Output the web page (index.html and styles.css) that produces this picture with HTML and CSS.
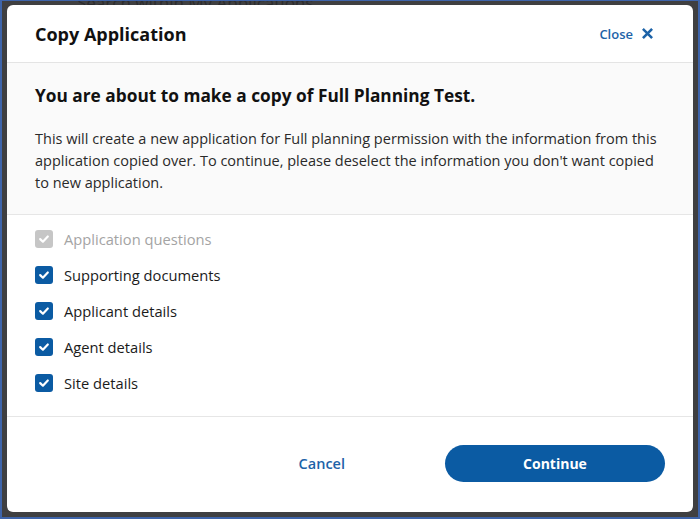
FILE: index.html
```html
<!DOCTYPE html>
<html lang="en">
<head>
<meta charset="utf-8">
<title>Copy Application</title>
<link rel="stylesheet" href="styles.css">
</head>
<body>
<div class="screen">
  <div class="behind">Search within My Applications</div>
  <div class="modal" role="dialog" aria-labelledby="modal-title">
    <header class="modal-header">
      <h2 id="modal-title" class="modal-title">Copy Application</h2>
      <button class="close-btn" type="button">Close
        <svg class="close-icon" viewBox="0 0 12 12" width="11" height="11" aria-hidden="true">
          <path d="M2 2 L10 10 M10 2 L2 10" stroke="currentColor" stroke-width="2.8" stroke-linecap="square" fill="none"/>
        </svg>
      </button>
    </header>
    <section class="intro">
      <h3 class="intro-heading">You are about to make a copy of Full Planning Test.</h3>
      <p class="intro-text">This will create a new application for Full planning permission with the information from this application copied over. To continue, please deselect the information you don't want copied to new application.</p>
    </section>
    <ul class="options">
      <li class="option disabled"><span class="box"><svg viewBox="0 0 12 12" width="12" height="12"><path d="M2.2 6.1 L4.9 8.7 L9.8 3.5" stroke="#fff" stroke-width="2.2" fill="none" stroke-linecap="round" stroke-linejoin="round"/></svg></span>Application questions</li>
      <li class="option"><span class="box"><svg viewBox="0 0 12 12" width="12" height="12"><path d="M2.2 6.1 L4.9 8.7 L9.8 3.5" stroke="#fff" stroke-width="2.2" fill="none" stroke-linecap="round" stroke-linejoin="round"/></svg></span>Supporting documents</li>
      <li class="option"><span class="box"><svg viewBox="0 0 12 12" width="12" height="12"><path d="M2.2 6.1 L4.9 8.7 L9.8 3.5" stroke="#fff" stroke-width="2.2" fill="none" stroke-linecap="round" stroke-linejoin="round"/></svg></span>Applicant details</li>
      <li class="option"><span class="box"><svg viewBox="0 0 12 12" width="12" height="12"><path d="M2.2 6.1 L4.9 8.7 L9.8 3.5" stroke="#fff" stroke-width="2.2" fill="none" stroke-linecap="round" stroke-linejoin="round"/></svg></span>Agent details</li>
      <li class="option"><span class="box"><svg viewBox="0 0 12 12" width="12" height="12"><path d="M2.2 6.1 L4.9 8.7 L9.8 3.5" stroke="#fff" stroke-width="2.2" fill="none" stroke-linecap="round" stroke-linejoin="round"/></svg></span>Site details</li>
    </ul>
    <footer class="modal-footer">
      <button class="btn-cancel" type="button">Cancel</button>
      <button class="btn-continue" type="button">Continue</button>
    </footer>
  </div>
</div>
</body>
</html>
```

FILE: styles.css
```css
* { box-sizing: border-box; }
html, body { margin: 0; padding: 0; }
body {
  font-family: "Open Sans", "Noto Sans", "Liberation Sans", sans-serif;
  color: #1b1b1b;
  background: #3e64aa;
}
.screen {
  position: relative;
  width: 700px;
  height: 519px;
  border: 2px solid #3e64aa;
  border-top-width: 1px;
  background: #3f3f41;
  padding: 4px 5px 0 5px;
  overflow: hidden;
}
.behind {
  position: absolute;
  left: 75px;
  top: -8px;
  font-size: 17px;
  line-height: 20px;
  color: #2c2c2e;
}
.modal {
  position: relative;
  width: 686px;
  height: 507px;
  background: #fff;
  border-radius: 6px;
  display: flex;
  flex-direction: column;
  overflow: hidden;
}
.modal-header {
  height: 58px;
  flex: none;
  display: flex;
  align-items: center;
  justify-content: space-between;
  padding: 0 40px 0 28px;
  border-bottom: 1px solid #e4e4e4;
}
.modal-title {
  margin: 0;
  font-size: 18px;
  font-weight: 700;
  color: #111;
}
.close-btn {
  border: 0;
  background: none;
  padding: 0;
  font-family: inherit;
  font-size: 13px;
  font-weight: 600;
  color: #1d63a8;
  display: flex;
  align-items: center;
  gap: 9px;
}
.close-icon { display: block; }
.intro {
  background: #fafafa;
  padding: 20px 28px 20px 28px;
  border-bottom: 1px solid #e6e6e6;
  flex: none;
}
.intro-heading {
  margin: 0 0 19px 0;
  font-size: 17.3px;
  font-weight: 700;
  color: #111;
  line-height: 26px;
}
.intro-text {
  margin: 0;
  font-size: 14.5px;
  line-height: 22px;
  color: #2a2a2a;
}
.options {
  list-style: none;
  margin: 0;
  padding: 6px 28px 15px 28px;
  border-bottom: 1px solid #e6e6e6;
  flex: none;
}
.option {
  height: 36px;
  display: flex;
  align-items: center;
  gap: 11px;
  font-size: 14.7px;
  color: #1b1b1b;
}
.box {
  width: 18px;
  height: 18px;
  border-radius: 3px;
  background: #0b5ba3;
  display: flex;
  align-items: center;
  justify-content: center;
  flex: none;
}
.option.disabled { color: #a4a4a4; }
.option.disabled .box { background: #c6c6c6; }
.modal-footer {
  flex: 1;
  display: flex;
  align-items: center;
  justify-content: flex-end;
  padding: 0 28px 2px 28px;
  gap: 100px;
}
.btn-cancel {
  border: 0;
  background: none;
  padding: 0;
  font-family: inherit;
  font-size: 14.5px;
  font-weight: 600;
  color: #1d63a8;
}
.btn-continue {
  width: 220px;
  height: 37px;
  border: 0;
  border-radius: 19px;
  background: #0b5ba3;
  color: #fff;
  font-family: inherit;
  font-size: 14px;
  font-weight: 700;
}
```
